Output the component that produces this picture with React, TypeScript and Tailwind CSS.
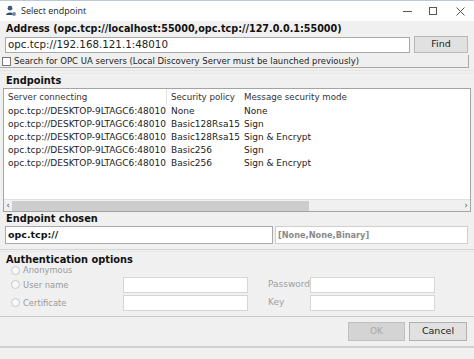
import React from "react";

const font = { fontFamily: '"DejaVu Sans", Verdana, sans-serif' };

function Radio({ label }: { label: string }) {
  return (
    <div className="flex items-center gap-[3px]">
      <span className="w-[9px] h-[9px] rounded-full border border-[#c8c8c8] bg-[#f8f8f8]" />
      <span className="text-[8.4px] text-[#9a9a9a]">{label}</span>
    </div>
  );
}

export default function App() {
  const rows = [
    ["None", "None"],
    ["Basic128Rsa15", "Sign"],
    ["Basic128Rsa15", "Sign & Encrypt"],
    ["Basic256", "Sign"],
    ["Basic256", "Sign & Encrypt"],
  ];
  return (
    <div className="w-[474px] h-[359px] bg-[#f0f0f0] flex flex-col overflow-hidden" style={font}>
      {/* Title bar */}
      <div className="h-[21px] bg-white flex items-center border-t border-[#b9c9d8] shrink-0">
        <svg width="12" height="12" viewBox="0 0 12 12" className="ml-[5px]">
          <circle cx="5" cy="3.2" r="2.4" fill="#3b5a80" />
          <path d="M1 10 C1 6.5 9 6.5 9 10 Z" fill="#2f4a6e" />
          <circle cx="9" cy="9" r="2" fill="#7a8ea6" />
        </svg>
        <span className="ml-[4px] text-[9px] text-[#222]" style={{ fontFamily: '"Open Sans", "Noto Sans", sans-serif' }}>
          Select endpoint
        </span>
        <div className="ml-auto flex items-center h-full">
          <div className="w-[26px] flex justify-center">
            <div className="w-[9px] h-[1px] bg-[#555]" />
          </div>
          <div className="w-[26px] flex justify-center">
            <div className="w-[8px] h-[8px] border border-[#555]" />
          </div>
          <div className="w-[28px] flex justify-center">
            <svg width="9" height="9" viewBox="0 0 9 9">
              <path d="M0.5 0.5 L8.5 8.5 M8.5 0.5 L0.5 8.5" stroke="#555" strokeWidth="1" />
            </svg>
          </div>
        </div>
      </div>

      {/* Address */}
      <div className="h-[13px] mt-[1px] pl-[6px] text-[9.6px] font-bold text-[#111] leading-[13px] whitespace-nowrap">
        Address (opc.tcp://localhost:55000,opc.tcp://127.0.0.1:55000)
      </div>
      <div className="flex items-center mt-[1px] pl-[5px] gap-[4px]">
        <div className="w-[405px] h-[16px] bg-white border border-[#a9a9a9] flex items-center pl-[2px] text-[10.3px] text-[#222]">
          opc.tcp://192.168.121.1:48010
        </div>
        <div className="w-[54px] h-[17px] bg-[#e1e1e1] border border-[#b8b8b8] flex items-center justify-center text-[9.5px] text-[#222]">
          Find
        </div>
      </div>

      {/* Checkbox row */}
      <div className="mt-[2px] mr-[5px] h-[13px] flex items-center border-b border-r border-[#a8a8a8] bg-[#efefef]">
        <span className="ml-[2px] w-[9px] h-[9px] border border-[#777] bg-white" />
        <span className="ml-[3px] text-[8.5px] text-[#222] whitespace-nowrap">
          Search for OPC UA servers (Local Discovery Server must be launched previously)
        </span>
      </div>
      <div className="mt-[2px] h-[1px] bg-[#e4e4e4]" />
      <div className="mt-[2px] h-[1px] bg-[#e9e9e9]" />

      {/* Endpoints */}
      <div className="mt-[0px] h-[13px] pl-[6px] text-[9.8px] font-bold text-[#111] leading-[13px]">Endpoints</div>
      <div className="mx-[3px] mt-[1px] h-[124px] bg-white border border-[#a4a4a4] flex flex-col">
        <div className="flex h-[15px] items-end text-[8.7px] text-[#333]">
          <div className="w-[163px] pl-[4px] h-full flex items-end border-r border-[#e3e3e3]">Server connecting</div>
          <div className="w-[73px] pl-[4px]">Security policy</div>
          <div className="pl-[4px]">Message security mode</div>
        </div>
        <div className="mt-[1px]">
          {rows.map((r, i) => (
            <div key={i} className="flex h-[13px] items-center text-[9px] text-[#222]">
              <div className="w-[163px] pl-[4px]">opc.tcp://DESKTOP-9LTAGC6:48010</div>
              <div className="w-[73px] pl-[4px]">{r[0]}</div>
              <div className="pl-[4px]">{r[1]}</div>
            </div>
          ))}
        </div>
        <div className="mt-auto h-[12px] flex items-center bg-[#f0f0f0] border-t border-[#e0e0e0]">
          <span className="w-[8px] text-[8px] text-[#444] text-center">‹</span>
          <div className="w-[297px] h-[10px] bg-[#cdcdcd]" />
          <span className="ml-auto w-[8px] text-[8px] text-[#444] text-center">›</span>
        </div>
      </div>

      {/* Endpoint chosen */}
      <div className="mt-[0px] h-[13px] pl-[6px] text-[9.8px] font-bold text-[#111] leading-[13px]">Endpoint chosen</div>
      <div className="flex mt-[1px] pl-[5px] gap-[2px]">
        <div className="w-[268px] h-[18px] bg-white border border-[#a9a9a9] flex items-center pl-[2px] text-[9.5px] font-bold text-[#111]">
          opc.tcp://
        </div>
        <div className="w-[193px] h-[18px] bg-white border border-[#cfcfcf] flex items-center pl-[2px] text-[8.2px] font-bold text-[#8a8a8a]">
          [None,None,Binary]
        </div>
      </div>
      <div className="mt-[5px] h-[1px] bg-[#d4d4d4]" />
      <div className="mt-[1px] h-[1px] bg-[#e8e8e8]" />

      {/* Authentication */}
      <div className="mt-[2px] h-[12px] pl-[6px] text-[9.8px] font-bold text-[#111] leading-[12px]">Authentication options</div>
      <div className="pl-[11px] h-[9px] flex items-center">
        <Radio label="Anonymous" />
      </div>
      <div className="flex items-center mt-[2px] h-[16px]">
        <div className="w-[123px] pl-[11px]">
          <Radio label="User name" />
        </div>
        <div className="w-[125px] h-[16px] bg-white border border-[#d6d6d6]" />
        <div className="w-[62px] pl-[20px] text-[9px] text-[#a0a0a0]">Password</div>
        <div className="w-[125px] h-[16px] bg-white border border-[#d6d6d6]" />
      </div>
      <div className="flex items-center mt-[2px] h-[16px]">
        <div className="w-[123px] pl-[11px]">
          <Radio label="Certificate" />
        </div>
        <div className="w-[125px] h-[16px] bg-white border border-[#d6d6d6]" />
        <div className="w-[62px] pl-[20px] text-[9px] text-[#a0a0a0]">Key</div>
        <div className="w-[125px] h-[16px] bg-white border border-[#d6d6d6]" />
      </div>
      <div className="mt-[5px] h-[1px] bg-[#c8c8c8]" />

      {/* Buttons */}
      <div className="flex justify-end gap-[4px] pr-[7px] mt-[5px]">
        <div className="w-[57px] h-[19px] bg-[#d4d4d4] border border-[#c0c0c0] flex items-center justify-center text-[9px] text-[#a8a8a8]">
          OK
        </div>
        <div className="w-[58px] h-[19px] bg-[#e1e1e1] border border-[#b0b0b0] flex items-center justify-center text-[9.5px] text-[#222]">
          Cancel
        </div>
      </div>
      <div className="mt-[5px] h-[2px] bg-[#d0d0d0]" />
      <div className="flex-1 bg-[#f0f0f0]" />
    </div>
  );
}
